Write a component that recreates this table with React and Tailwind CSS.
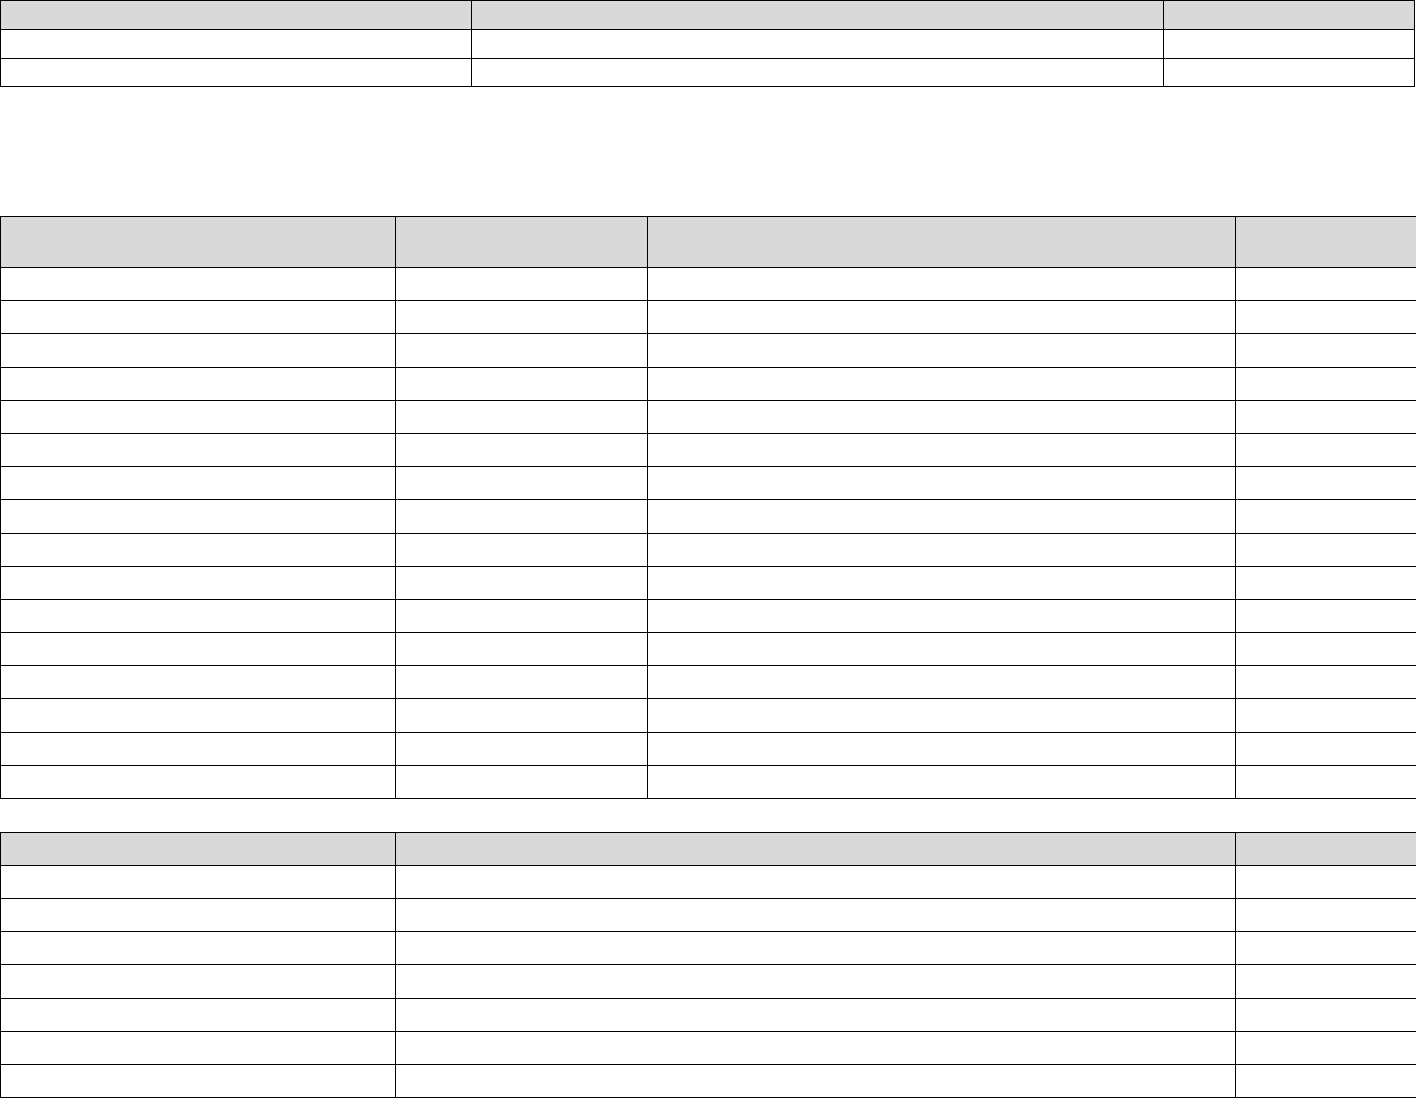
// column widths for each sheet, written out so Tailwind picks them up
const topCols = ['w-[471px]', 'w-[692px]', 'w-[251px]']
const mainCols = ['w-[395px]', 'w-[252px]', 'w-[588px]', 'w-[181px]']
const sumCols = ['w-[395px]', 'w-[840px]', 'w-[181px]']

function Sheet({ cols, headH, rowH, rows, className = '' }) {
  return (
    <table className={`table-fixed border-collapse ${className}`}>
      <colgroup>
        {cols.map((w, i) => (
          <col key={i} className={w} />
        ))}
      </colgroup>
      <thead>
        <tr className={headH}>
          {cols.map((_, i) => (
            <th key={i} className="border border-black bg-[#d9d9d9] p-0" />
          ))}
        </tr>
      </thead>
      <tbody>
        {Array.from({ length: rows }).map((_, r) => (
          <tr key={r} className={rowH}>
            {cols.map((_, i) => (
              <td key={i} className="border border-black bg-white p-0" />
            ))}
          </tr>
        ))}
      </tbody>
    </table>
  )
}

export default function App() {
  return (
    <div className="min-h-[1098px] bg-white font-['Liberation_Sans',Arial,sans-serif] text-[13px] text-black">
      {/* summary strip */}
      <Sheet cols={topCols} headH="h-[29px]" rowH="h-[28.5px]" rows={2} className="w-[1414px]" />

      {/* main grid */}
      <Sheet cols={mainCols} headH="h-[51px]" rowH="h-[33.2px]" rows={16} className="mt-[129px] w-[1416px]" />

      {/* totals */}
      <Sheet cols={sumCols} headH="h-[33px]" rowH="h-[33.15px]" rows={7} className="mt-[33px] w-[1416px]" />
    </div>
  )
}
